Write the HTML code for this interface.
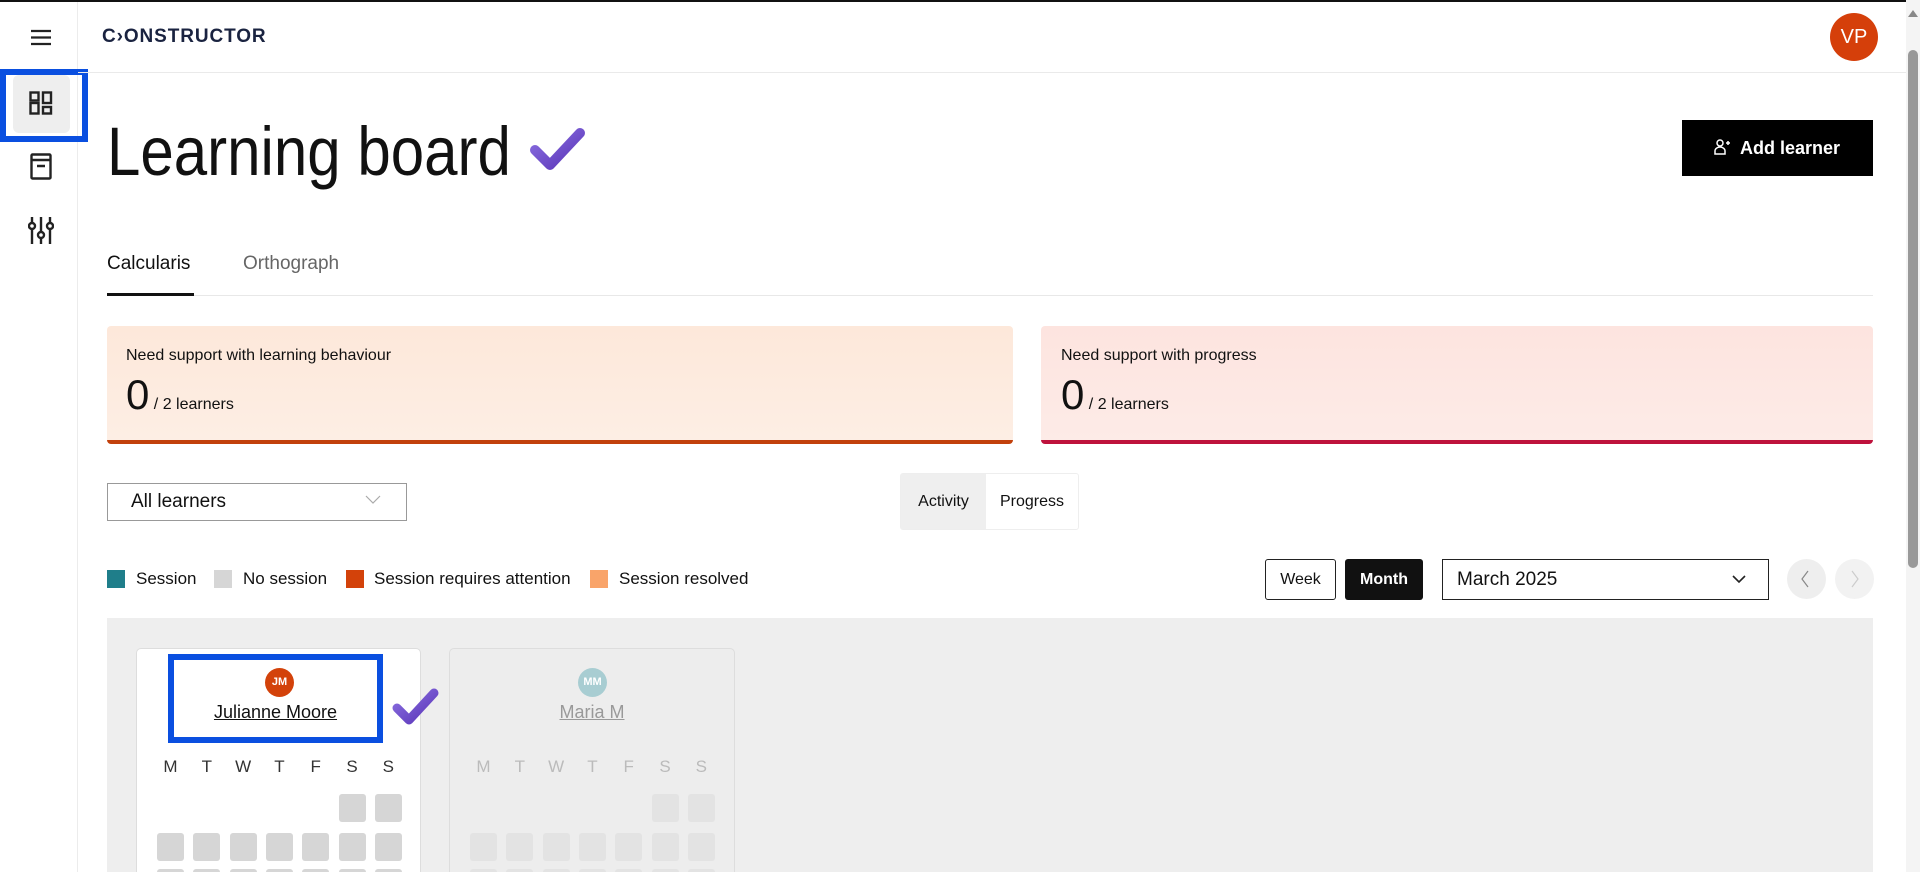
<!DOCTYPE html>
<html><head><meta charset="utf-8"><style>
*{box-sizing:border-box;margin:0;padding:0}
html,body{width:1920px;height:872px;overflow:hidden}
body{background:#fff;font-family:"Liberation Sans",sans-serif;color:#111}
#w{position:relative;width:1920px;height:872px;overflow:hidden}
.a{position:absolute}
.card{position:absolute;border-radius:4px;overflow:hidden}
.cell{position:absolute;width:27px;height:28px;border-radius:3px;background:#d6d6d6}
.day{position:absolute;font-size:17px;color:#333;width:27px;text-align:center}
.lg{position:absolute;top:570px;width:18px;height:18px}
.lt{position:absolute;top:569px;font-size:17px;white-space:nowrap}
</style></head><body><div id="w">
<div class="a" style="left:0;top:0;width:1906px;height:2px;background:#111"></div>
<!-- sidebar -->
<div class="a" style="left:77px;top:2px;width:1px;height:870px;background:#ececec"></div>
<svg class="a" style="left:30px;top:28px" width="22" height="19"><path d="M1 3h20M1 9.5h20M1 16h20" stroke="#222" stroke-width="2.2"/></svg>
<div class="a" style="left:0;top:69px;width:88px;height:73px;border:6px solid #0a4fe0"></div>
<div class="a" style="left:13px;top:75px;width:57px;height:58px;background:#eee;border-radius:6px"></div>
<svg class="a" style="left:29px;top:91px" width="24" height="24" fill="none" stroke="#222" stroke-width="2.4"><rect x="1.5" y="1.5" width="8" height="8"/><rect x="1.5" y="12" width="8" height="10.5"/><rect x="14" y="1.5" width="8" height="10.5"/><rect x="14" y="16" width="8" height="6.5"/></svg>
<svg class="a" style="left:30px;top:153px" width="22" height="27" fill="none" stroke="#222" stroke-width="2.4"><rect x="1.5" y="1.5" width="19" height="24" rx="1"/><path d="M2 7h18M7 13h8"/></svg>
<svg class="a" style="left:28px;top:216px" width="26" height="29" fill="none" stroke="#222" stroke-width="2.4"><path d="M4 1v6M4 13v15M13 1v15M13 22v6M22 1v6M22 13v15"/><circle cx="4" cy="10" r="3"/><circle cx="13" cy="19" r="3"/><circle cx="22" cy="10" r="3"/></svg>
<!-- header -->
<div class="a" style="left:102px;top:26px;font-size:19px;font-weight:bold;color:#1a2340;letter-spacing:0.9px">C›ONSTRUCTOR</div>
<div class="a" style="left:78px;top:72px;width:1828px;height:1px;background:#eaeaea"></div>
<div class="a" style="left:1830px;top:13px;width:48px;height:48px;border-radius:50%;background:#d53f0a;color:#fff;font-size:20px;text-align:center;line-height:48px">VP</div>
<div class="a" style="left:1906px;top:0;width:14px;height:872px;background:#f4f4f4"></div>
<svg class="a" style="left:1907px;top:8px" width="12" height="10"><path d="M1 9L6 2l5 7z" fill="#888"/></svg>
<div class="a" style="left:1908px;top:50px;width:10px;height:518px;background:#999;border-radius:5px"></div>
<!-- title -->
<div class="a" style="left:107px;top:112px;font-size:69px;color:#111;transform:scaleX(0.87);transform-origin:left top;white-space:nowrap">Learning board</div>
<svg class="a" style="left:528px;top:124px" width="60" height="50"><defs><linearGradient id="g" x1="0" y1="0" x2="1" y2="1"><stop offset="0" stop-color="#8a6fe0"/><stop offset="1" stop-color="#5a35b8"/></linearGradient></defs><path d="M7 26 L22 41 L52 9" fill="none" stroke="url(#g)" stroke-width="10" stroke-linecap="round" stroke-linejoin="round"/></svg>
<div class="a" style="left:1682px;top:120px;width:191px;height:56px;background:#000;color:#fff;font-size:18px;font-weight:bold;line-height:56px;padding-left:58px">Add learner</div>
<svg class="a" style="left:1714px;top:138px" width="16" height="18" fill="none" stroke="#fff" stroke-width="1.5"><circle cx="6" cy="5" r="3"/><path d="M1 16v-3a5 4 0 0 1 10 0v3zM12 5h4M14 3v4"/></svg>
<!-- tabs -->
<div class="a" style="left:107px;top:253px;font-size:19px;color:#111">Calcularis</div>
<div class="a" style="left:243px;top:253px;font-size:19px;color:#666">Orthograph</div>
<div class="a" style="left:107px;top:295px;width:1766px;height:1px;background:#e8e8e8"></div>
<div class="a" style="left:107px;top:293px;width:87px;height:3px;background:#111"></div>
<!-- cards -->
<div class="card" style="left:107px;top:326px;width:906px;height:118px;background:linear-gradient(180deg,#fde8da,#fdeee4);border-bottom:4px solid #c2410c"></div>
<div class="card" style="left:1041px;top:326px;width:832px;height:118px;background:linear-gradient(180deg,#fde4df,#fdebe7);border-bottom:4px solid #be123c"></div>
<div class="a" style="left:126px;top:347px;font-size:16px">Need support with learning behaviour</div>
<div class="a" style="left:126px;top:371px;font-size:42px">0<span style="font-size:16px"> / 2 learners</span></div>
<div class="a" style="left:1061px;top:347px;font-size:16px">Need support with progress</div>
<div class="a" style="left:1061px;top:371px;font-size:42px">0<span style="font-size:16px"> / 2 learners</span></div>
<!-- filters -->
<div class="a" style="left:107px;top:483px;width:300px;height:38px;border:1px solid #999;font-size:19px;line-height:36px;padding-left:23px">All learners</div>
<svg class="a" style="left:365px;top:495px" width="16" height="10"><path d="M1 1l7 7 7-7" fill="none" stroke="#aaa" stroke-width="1.2"/></svg>
<div class="a" style="left:900px;top:473px;width:179px;height:57px;border:1px solid #eee;border-radius:3px;font-size:16px;line-height:55px"><span style="display:inline-block;width:85px;background:#efefef;text-align:center">Activity</span><span style="display:inline-block;width:92px;text-align:center">Progress</span></div>
<!-- legend -->
<div class="lg" style="left:107px;background:#1f7e8a"></div><div class="lt" style="left:136px">Session</div>
<div class="lg" style="left:214px;background:#d6d6d6"></div><div class="lt" style="left:243px">No session</div>
<div class="lg" style="left:346px;background:#d3420a"></div><div class="lt" style="left:374px">Session requires attention</div>
<div class="lg" style="left:590px;background:#f9a46a"></div><div class="lt" style="left:619px">Session resolved</div>
<div class="a" style="left:1265px;top:559px;width:71px;height:41px;border:1px solid #222;border-radius:3px;font-size:16px;text-align:center;line-height:39px">Week</div>
<div class="a" style="left:1345px;top:559px;width:78px;height:41px;background:#111;color:#fff;border-radius:3px;font-size:16px;font-weight:bold;text-align:center;line-height:41px">Month</div>
<div class="a" style="left:1442px;top:559px;width:327px;height:41px;border:1px solid #222;font-size:19px;line-height:39px;padding-left:14px">March 2025</div>
<svg class="a" style="left:1732px;top:575px" width="14" height="9"><path d="M1 1l6 6 6-6" fill="none" stroke="#222" stroke-width="1.6"/></svg>
<div class="a" style="left:1787px;top:559px;width:39px;height:40px;border-radius:50%;background:#eee"></div>
<div class="a" style="left:1835px;top:559px;width:39px;height:40px;border-radius:50%;background:#f2f2f2"></div>
<svg class="a" style="left:1800px;top:570px" width="10" height="18"><path d="M8 1L2 9l6 8" fill="none" stroke="#888" stroke-width="1.2"/></svg>
<svg class="a" style="left:1850px;top:570px" width="10" height="18"><path d="M2 1l6 8-6 8" fill="none" stroke="#ccc" stroke-width="1.2"/></svg>
<!-- board -->
<div class="a" style="left:107px;top:618px;width:1766px;height:254px;background:#eee"></div>
<div class="a" style="left:136px;top:648px;width:285px;height:240px;background:#fff;border:1px solid #ddd;border-radius:5px"></div>
<div class="a" style="left:449px;top:648px;width:286px;height:240px;background:#ededed;border:1px solid #ddd;border-radius:5px"></div>
<div class="a" style="left:168px;top:654px;width:215px;height:89px;border:6px solid #0a4fe0"></div>
<div class="a" style="left:265px;top:668px;width:29px;height:29px;border-radius:50%;background:#d3420a;color:#fff;font-size:11px;font-weight:bold;text-align:center;line-height:29px">JM</div>
<div class="a" style="left:168px;top:702px;width:215px;text-align:center;font-size:18px;text-decoration:underline">Julianne Moore</div>
<svg class="a" style="left:390px;top:684px" width="52" height="44"><path d="M7 24 L19 36 L44 9" fill="none" stroke="url(#g)" stroke-width="9" stroke-linecap="round" stroke-linejoin="round"/></svg>
<div class="a" style="left:578px;top:668px;width:29px;height:29px;border-radius:50%;background:#a8cdd2;color:#fff;font-size:11px;font-weight:bold;text-align:center;line-height:29px">MM</div>
<div class="a" style="left:449px;top:702px;width:286px;text-align:center;font-size:18px;text-decoration:underline;color:#999">Maria M</div>
<div id="c1"></div>
</div>
<script>
var L=['M','T','W','T','F','S','S'],h='';
[[157,'#333','#d6d6d6'],[470,'#bbb','#e3e3e3']].forEach(function(c){
for(var i=0;i<7;i++){var x=c[0]+i*36.3;
h+='<div class="day" style="left:'+x+'px;top:757px;color:'+c[1]+'">'+L[i]+'</div>';
h+='<div class="cell" style="left:'+x+'px;top:833px;background:'+c[2]+'"></div>';
h+='<div class="cell" style="left:'+x+'px;top:869px;background:'+c[2]+'"></div>';
if(i>=5)h+='<div class="cell" style="left:'+x+'px;top:794px;background:'+c[2]+'"></div>';}});
document.getElementById('c1').innerHTML=h;
</script>
</body></html>
